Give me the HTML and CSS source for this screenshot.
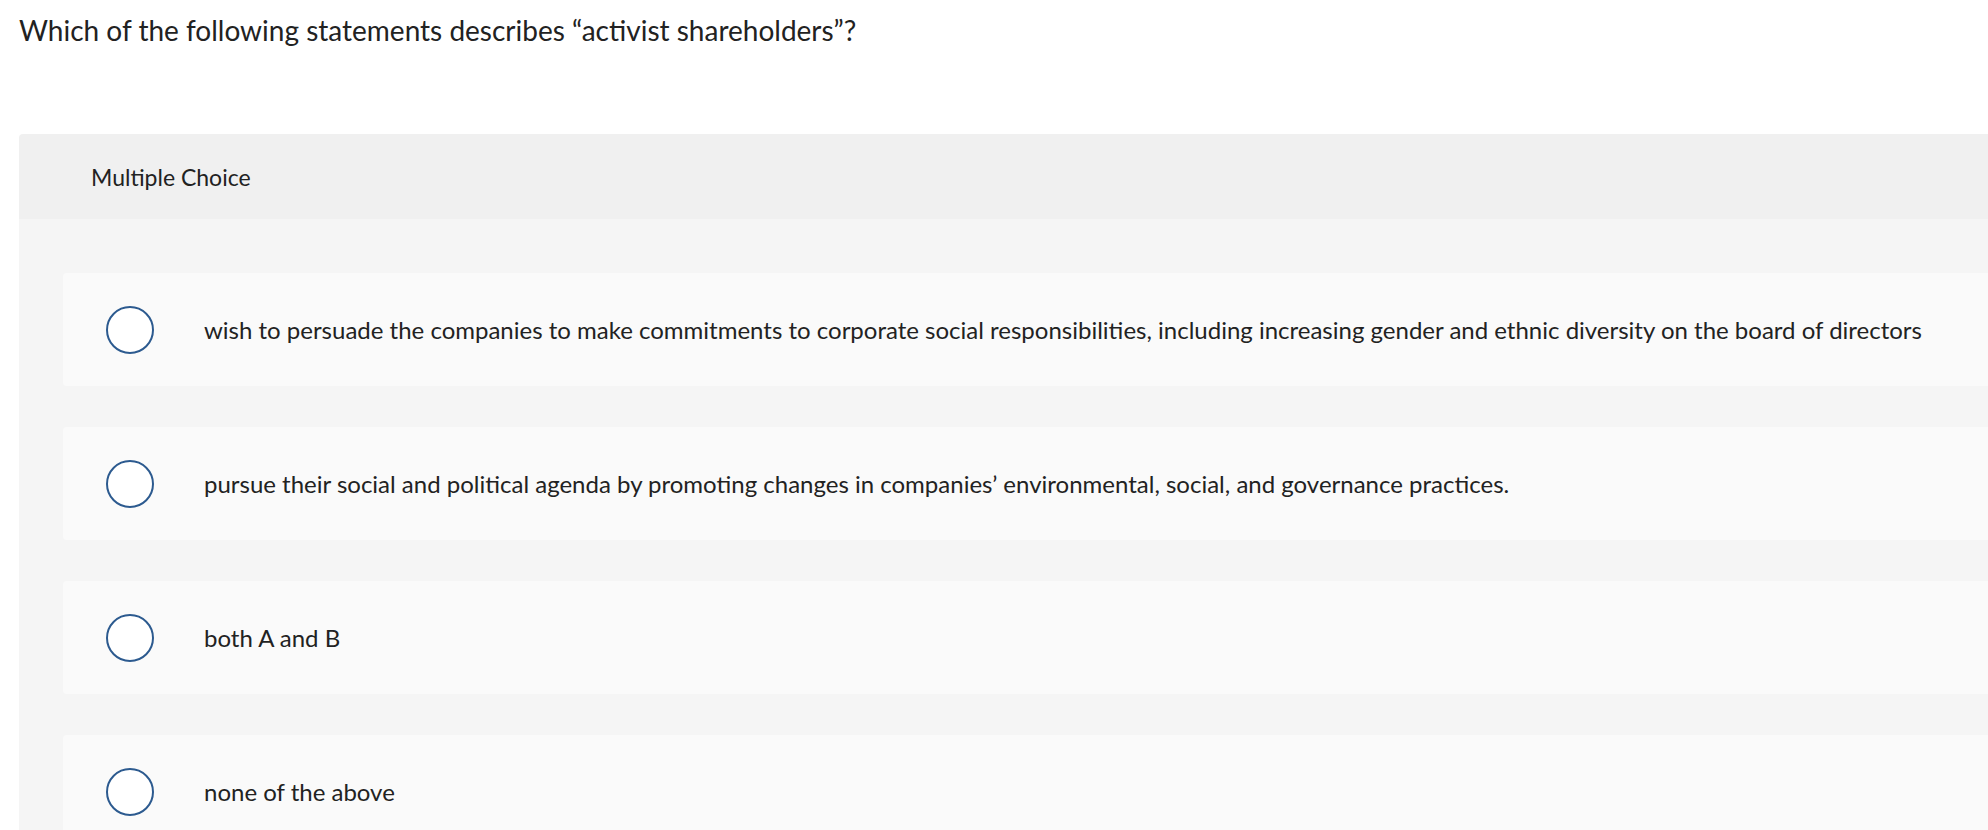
FILE: index.html
```html
<!DOCTYPE html>
<html lang="en">
<head>
<meta charset="utf-8">
<title>Multiple Choice</title>
<link rel="stylesheet" href="styles.css">
</head>
<body>
<div class="page">
  <h1 class="question">Which of the following statements describes “activist shareholders”?</h1>
  <section class="panel">
    <div class="panel-header">Multiple Choice</div>
    <div class="panel-body">
      <label class="option"><span class="radio"></span><span class="option-text">wish to persuade the companies to make commitments to corporate social responsibilities, including increasing gender and ethnic diversity on the board of directors</span></label>
      <label class="option"><span class="radio"></span><span class="option-text">pursue their social and political agenda by promoting changes in companies’ environmental, social, and governance practices.</span></label>
      <label class="option"><span class="radio"></span><span class="option-text">both A and B</span></label>
      <label class="option"><span class="radio"></span><span class="option-text">none of the above</span></label>
    </div>
  </section>
</div>
</body>
</html>
```

FILE: styles.css
```css
html, body {
  margin: 0;
  padding: 0;
  background: #ffffff;
  overflow: hidden;
}
.page {
  font-family: Lato, "Liberation Sans", sans-serif;
  color: #222222;
  padding-left: 19px;
}
.question {
  margin: 0;
  padding-top: 13px;
  font-size: 28px;
  line-height: 34px;
  font-weight: 400;
  height: 134px;
  box-sizing: border-box;
}
.panel {
  display: flex;
  flex-direction: column;
}
.panel-header {
  height: 85px;
  background: #f0f0f0;
  display: flex;
  align-items: center;
  padding-left: 72px;
  font-size: 23px;
  border-top-left-radius: 4px;
}
.panel-body {
  background: #f5f5f5;
  padding: 54px 0 60px 44px;
  display: flex;
  flex-direction: column;
  gap: 41px;
}
.option {
  height: 113px;
  background: #fafafa;
  border-radius: 4px 0 0 4px;
  display: flex;
  align-items: center;
  padding-left: 43px;
  gap: 50px;
  font-size: 24px;
}
.radio {
  width: 48px;
  height: 48px;
  box-sizing: border-box;
  border: 2px solid #2c5a8f;
  border-radius: 50%;
  background: #ffffff;
  flex: none;
}
.option-text {
  white-space: nowrap;
}
```
